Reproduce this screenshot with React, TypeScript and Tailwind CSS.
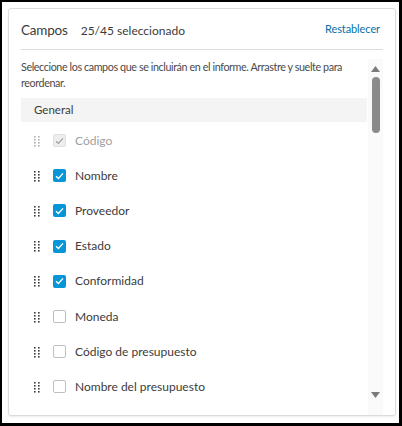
import React from "react";

const font = { fontFamily: 'Lato, "Noto Sans", sans-serif' };

function DragHandle({ faded }: { faded?: boolean }) {
  return (
    <svg width="7" height="12" viewBox="0 0 7 12" className={faded ? "opacity-40" : ""}>
      {[0, 3, 6, 9].map((y) =>
        [0, 4].map((x) => (
          <rect key={`${x}-${y}`} x={x + 1} y={y + 1} width="1.6" height="1.6" fill="#3c3c3c" />
        ))
      )}
    </svg>
  );
}

function Check({ state }: { state: "on" | "off" | "disabled" }) {
  if (state === "on")
    return (
      <div className="w-[13px] h-[13px] rounded-[2px] bg-[#0696d7] flex items-center justify-center">
        <svg width="9" height="8" viewBox="0 0 9 8">
          <path d="M1 4.2 L3.4 6.4 L8 1.4" stroke="#fff" strokeWidth="1.4" fill="none" />
        </svg>
      </div>
    );
  if (state === "disabled")
    return (
      <div className="w-[13px] h-[13px] rounded-[2px] bg-[#eeeeee] border border-[#e0e0e0] flex items-center justify-center">
        <svg width="9" height="8" viewBox="0 0 9 8">
          <path d="M1 4.2 L3.4 6.4 L8 1.4" stroke="#a0a0a0" strokeWidth="1.3" fill="none" />
        </svg>
      </div>
    );
  return <div className="w-[13px] h-[13px] rounded-[2px] bg-white border border-[#c0c0c0]" />;
}

const rows: { label: string; state: "on" | "off" | "disabled" }[] = [
  { label: "Código", state: "disabled" },
  { label: "Nombre", state: "on" },
  { label: "Proveedor", state: "on" },
  { label: "Estado", state: "on" },
  { label: "Conformidad", state: "on" },
  { label: "Moneda", state: "off" },
  { label: "Código de presupuesto", state: "off" },
  { label: "Nombre del presupuesto", state: "off" },
];

export default function App() {
  return (
    <div
      className="w-[402px] h-[426px] bg-white border-black border-l-2 border-t-2 border-r-[3px] border-b-[3px] pl-[6px] pt-[6px] box-border"
      style={font}
    >
      <div className="w-[388px] h-[408px] border border-[#dcdcdc] rounded-[3px] shadow-[0_1px_2px_rgba(0,0,0,0.08)] px-3 flex flex-col overflow-hidden">
        <div className="h-[41px] flex items-center pt-[3px] pr-[3px] border-b border-[#dcdcdc] shrink-0">
          <span className="text-[13.5px] tracking-[-0.2px] text-[#3c3c3c]">Campos</span>
          <span className="text-[12px] text-[#3c3c3c] ml-[13px] mt-[1px]">25/45 seleccionado</span>
          <span className="ml-auto text-[11px] tracking-[-0.1px] text-[#0670a8] -mt-[3px]">Restablecer</span>
        </div>
        <div className="flex flex-1 min-h-0 pt-[9px]">
          <div className="flex-1 min-w-0 overflow-hidden">
            <p className="text-[10.75px] tracking-[-0.4px] leading-[16px] text-[#4a4a4a]">
              Seleccione los campos que se incluirán en el informe. Arrastre y suelte para reordenar.
            </p>
            <div className="mt-[7px] h-[24px] bg-[#f4f4f4] flex items-center pl-[13px] text-[11.5px] text-[#3c3c3c]">
              General
            </div>
            <div className="flex flex-col pt-[1px]">
              {rows.map((r) => (
                <div key={r.label} className="h-[35.2px] flex items-center pl-[12px]">
                  <DragHandle faded={r.state === "disabled"} />
                  <div className="ml-[13px]">
                    <Check state={r.state} />
                  </div>
                  <span
                    className={`ml-[9px] text-[12px] ${r.state === "disabled" ? "text-[#a0a0a0]" : "text-[#3c3c3c]"}`}
                  >
                    {r.label}
                  </span>
                </div>
              ))}
            </div>
          </div>
          <div className="w-[15px] ml-[1px] bg-[#fafafa] flex flex-col items-center pt-[7px] pb-[17px]">
            <svg width="9" height="6" viewBox="0 0 9 6">
              <path d="M4.5 0 L9 6 L0 6 Z" fill="#7a7a7a" />
            </svg>
            <div className="w-[8px] h-[56px] rounded-full bg-[#8a8a8a] mt-[5px]" />
            <div className="flex-1" />
            <svg width="9" height="6" viewBox="0 0 9 6">
              <path d="M0 0 L9 0 L4.5 6 Z" fill="#7a7a7a" />
            </svg>
          </div>
        </div>
      </div>
    </div>
  );
}
